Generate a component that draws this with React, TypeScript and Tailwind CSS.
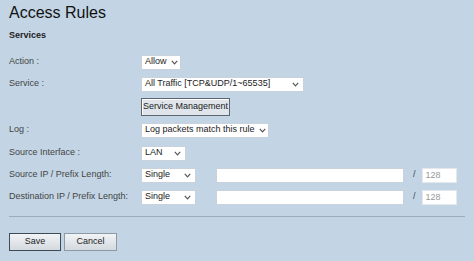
import React from 'react';

function Chevron() {
  return (
    <svg width="7" height="5" viewBox="0 0 7 5" className="shrink-0">
      <path d="M0.8 0.9 L3.5 3.8 L6.2 0.9" fill="none" stroke="#555" strokeWidth="1.2" />
    </svg>
  );
}

function FakeSelect({ value, width }: { value: string; width: string }) {
  return (
    <div
      className={`${width} h-[15px] bg-white border border-[#c8d2dc] flex items-center justify-between gap-[4px] pl-[3px] pr-[4px] text-[9px] text-[#222]`}
    >
      <span className="whitespace-nowrap">{value}</span>
      <Chevron />
    </div>
  );
}

function Row({ label, children, h = 'h-[22px]' }: { label: string; children?: React.ReactNode; h?: string }) {
  return (
    <div className={`flex items-center ${h}`}>
      <div className="w-[132px] shrink-0 text-[9px] text-[#444]">{label}</div>
      <div className="flex items-center">{children}</div>
    </div>
  );
}

export default function App() {
  return (
    <div
      className="w-[474px] h-[261px] bg-[#c3d5e5] overflow-hidden"
      style={{ fontFamily: '"Liberation Sans", Arial, sans-serif' }}
    >
      <div className="pl-[9px] pr-[9px]">
        <h1 className="pt-[3px] text-[16px] leading-[20px] text-[#111]">Access Rules</h1>
        <div className="mt-[6px] text-[9px] font-bold text-[#222] leading-[12px]">Services</div>
        <div className="mt-[10px]">
          <Row label="Action :">
            <FakeSelect value="Allow" width="w-[40px]" />
          </Row>
          <Row label="Service :">
            <FakeSelect value="All Traffic [TCP&UDP/1~65535]" width="w-[163px]" />
          </Row>
          <Row label="" h="h-[23px]">
            <button className="h-[18px] px-[1px] bg-[#dfe5eb] border border-[#5b6670] text-[9px] text-[#222] leading-none shadow-[inset_1px_1px_0_#fff]">
              Service Management
            </button>
          </Row>
          <Row label="Log :" h="h-[24px]">
            <FakeSelect value="Log packets match this rule" width="w-[128px]" />
          </Row>
          <Row label="Source Interface :">
            <FakeSelect value="LAN" width="w-[45px]" />
          </Row>
          <Row label="Source IP / Prefix Length:">
            <FakeSelect value="Single" width="w-[55px]" />
            <div className="ml-[20px] w-[188px] h-[15px] bg-white border border-[#c8d2dc]" />
            <span className="ml-[9px] mr-[6px] text-[9px] text-[#444]">/</span>
            <div className="w-[35px] h-[15px] bg-white border border-[#e2e8ee] text-[9px] text-[#999] pl-[3px] leading-[13px]">128</div>
          </Row>
          <Row label="Destination IP / Prefix Length:">
            <FakeSelect value="Single" width="w-[55px]" />
            <div className="ml-[20px] w-[188px] h-[15px] bg-white border border-[#c8d2dc]" />
            <span className="ml-[9px] mr-[6px] text-[9px] text-[#444]">/</span>
            <div className="w-[35px] h-[15px] bg-white border border-[#e2e8ee] text-[9px] text-[#999] pl-[3px] leading-[13px]">128</div>
          </Row>
        </div>
        <div className="mt-[8px] border-t border-[#9aadbd] w-[456px]" />
        <div className="mt-[16px] flex gap-[3px]">
          <button className="w-[52px] h-[18px] bg-gradient-to-b from-[#f2f4f6] to-[#d3d9df] border border-[#3e4a55] text-[9px] text-[#222]">
            Save
          </button>
          <button className="w-[53px] h-[18px] bg-gradient-to-b from-[#f2f4f6] to-[#d3d9df] border border-[#8d99a4] text-[9px] text-[#222]">
            Cancel
          </button>
        </div>
      </div>
    </div>
  );
}
